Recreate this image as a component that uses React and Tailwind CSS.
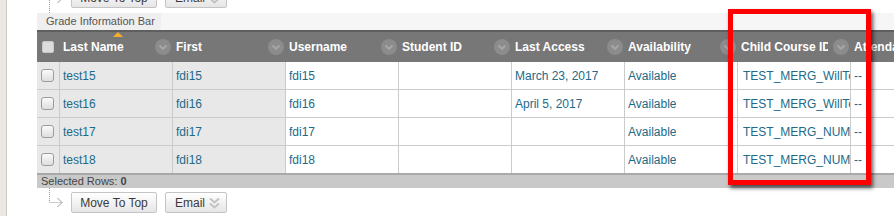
import React from "react";

const FONT = { fontFamily: '"Liberation Sans", Arial, sans-serif' };

const headers = ["Last Name", "First", "Username", "Student ID", "Last Access", "Availability", "Child Course ID", "Attendance"];
const rows = [
  ["test15", "fdi15", "fdi15", "", "March 23, 2017", "Available", "TEST_MERG_WillTest", "--"],
  ["test16", "fdi16", "fdi16", "", "April 5, 2017", "Available", "TEST_MERG_WillTest", "--"],
  ["test17", "fdi17", "fdi17", "", "", "Available", "TEST_MERG_NUMBER", "--"],
  ["test18", "fdi18", "fdi18", "", "", "Available", "TEST_MERG_NUMBER", "--"],
];

function Chevron() {
  return (
    <svg width="16" height="16" viewBox="0 0 16 16" className="shrink-0">
      <circle cx="8" cy="8" r="8" fill="#8c8c8c" />
      <path d="M4.5 6.5 L8 9.8 L11.5 6.5" fill="none" stroke="#a6a6a6" strokeWidth="2" />
    </svg>
  );
}

function Connector({ top }) {
  const y = top ? 11 : 10;
  return (
    <svg width="34" height="21" viewBox="0 0 34 21" className="shrink-0 overflow-visible">
      {top ? (
        <line x1="12.5" y1={y} x2="12.5" y2="26" stroke="#9a9a9a" strokeWidth="1" strokeDasharray="1 1" />
      ) : (
        <line x1="12.5" y1="-4" x2="12.5" y2={y} stroke="#9a9a9a" strokeWidth="1" strokeDasharray="1 1" />
      )}
      <line x1="12.5" y1={y + 0.5} x2="25" y2={y + 0.5} stroke="#9a9a9a" strokeWidth="1" strokeDasharray="1 1" />
      <path d={`M20.5 ${y - 4} L25 ${y + 0.5} L20.5 ${y + 5}`} fill="none" stroke="#9a9a9a" strokeWidth="1" />
    </svg>
  );
}

function DoubleDown() {
  return (
    <svg width="11" height="12" viewBox="0 0 11 12" className="ml-[4px]">
      <path d="M1 1.5 L5.5 5.5 L10 1.5" fill="none" stroke="#c3c3c3" strokeWidth="2" />
      <path d="M1 6.5 L5.5 10.5 L10 6.5" fill="none" stroke="#c3c3c3" strokeWidth="2" />
    </svg>
  );
}

function ActionBar({ top }) {
  return (
    <div className={`flex items-center h-[21px] ${top ? "-mt-[13px]" : "mt-[4px]"}`}>
      <Connector top={top} />
      <button className="h-[21px] w-[86px] border border-[#c4c4c4] rounded-[2px] bg-gradient-to-b from-[#ffffff] to-[#e6e6e6] text-[12px] text-[#3a3a3a] leading-none">
        Move To Top
      </button>
      <button className="ml-[8px] h-[21px] w-[62px] border border-[#c4c4c4] rounded-[2px] bg-gradient-to-b from-[#ffffff] to-[#e6e6e6] text-[12px] text-[#3a3a3a] leading-none flex items-center pl-[9px]">
        Email
        <DoubleDown />
      </button>
    </div>
  );
}

function Checkbox({ header }) {
  return header ? (
    <div className="w-[12px] h-[12px] rounded-[2px] bg-[#dcdcdc] border border-[#c8c8c8]" />
  ) : (
    <div className="w-[13px] h-[13px] rounded-[3px] border border-[#9c9c9c] bg-gradient-to-b from-[#fafafa] to-[#dedede]" />
  );
}

export default function App() {
  return (
    <div className="w-[894px] h-[216px] overflow-hidden relative bg-white flex" style={FONT}>
      <div className="w-[7px] h-full bg-[#ebe8e3] border-r border-[#cdc9c2] shrink-0" />
      <div className="flex-1 min-w-0 pl-[30px] flex flex-col">
        <ActionBar top />
        <div className="mt-[5px] overflow-hidden">
          <div className="h-[17px] bg-[#f6f6f6] flex">
            <div className="w-[124px] bg-[#efefef] text-[11px] text-[#555] pl-[9px] leading-[17px] whitespace-nowrap">
              Grade Information Bar
            </div>
          </div>
          <div className="border-t-2 border-[#5f5f5f] h-[32px] bg-[#777777] flex w-max">
            <div className="w-[23px] shrink-0 flex items-center pl-[5px]">
              <Checkbox header />
            </div>
            {headers.map((h, i) => (
              <div key={h} className="w-[113px] shrink-0 flex items-center pl-[3px] pr-[2px] relative">
                {i === 0 && (
                  <div className="absolute top-0 left-[53px] w-0 h-0 border-l-[5px] border-r-[5px] border-b-[5px] border-l-transparent border-r-transparent border-b-[#f7ac2b]" />
                )}
                <div className="flex-1 min-w-0 overflow-hidden whitespace-nowrap text-[12px] font-bold text-white">{h}</div>
                <div className="ml-[5px]"><Chevron /></div>
              </div>
            ))}
          </div>
          {rows.map((r, ri) => (
            <div key={ri} className="flex w-max h-[28px] border-b border-[#cbcbcb]">
              <div className="w-[23px] shrink-0 bg-[#e8e8e8] border-r border-[#cbcbcb] flex items-center pl-[4px]">
                <Checkbox />
              </div>
              {r.map((c, ci) => (
                <div
                  key={ci}
                  className={`w-[113px] shrink-0 border-r border-[#cbcbcb] flex items-center overflow-hidden whitespace-nowrap text-[12px] text-[#226a88] ${ci === 6 ? "pl-[5px]" : "pl-[3px]"} ${ci < 2 ? "bg-[#e8e8e8]" : "bg-white"}`}
                >
                  <span className="block overflow-hidden">{c}</span>
                </div>
              ))}
            </div>
          ))}
          <div className="-mt-px border-t-2 border-[#a9a9a9] h-[15px] bg-[#c9c9c9] text-[11px] text-[#444] pl-[4px] leading-[13px]">
            Selected Rows: <span className="font-bold">0</span>
          </div>
        </div>
        <ActionBar />
      </div>
      <div className="absolute left-[728px] top-[9px] w-[143px] h-[176px] border-[5px] border-[#ff0000] shadow-[2px_3px_4px_rgba(0,0,0,0.65)]" />
    </div>
  );
}
